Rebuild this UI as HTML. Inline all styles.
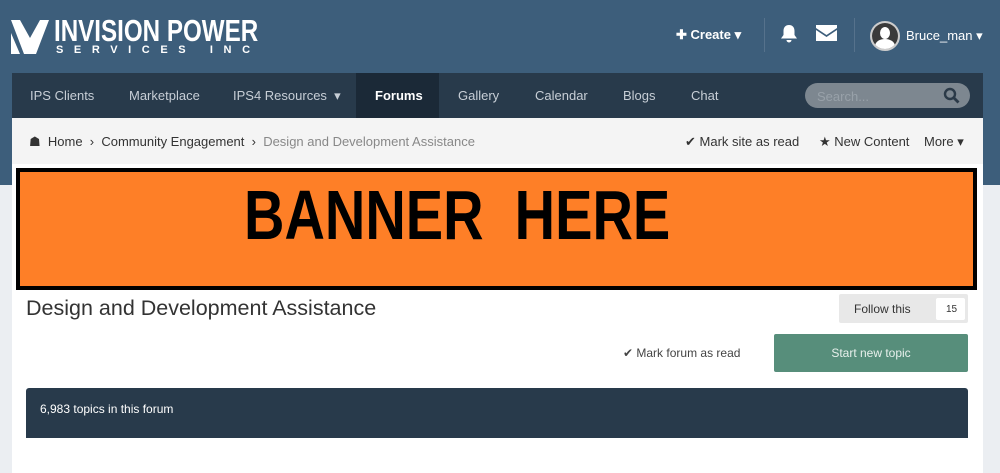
<!DOCTYPE html>
<html><head><style>
*{margin:0;padding:0;box-sizing:border-box}
body{width:1000px;height:430px;overflow:hidden;background:#ebeef2;font-family:"Liberation Sans",sans-serif;position:relative}
.a{position:absolute}
#hdr{left:0;top:0;width:1000px;height:185px;background:#3d5e7b}
#wrap{left:12px;top:73px;width:971px;height:400px;background:#fff}
#nav{left:12px;top:73px;width:971px;height:45px;background:#283a4b}
.nv{top:73px;height:45px;line-height:45px;color:#c7ced6;font-size:13px}
#bc{left:12px;top:118px;width:971px;height:46px;background:#f4f4f4}
.t{font-size:13px;color:#333}
</style></head><body>
<div id="hdr" class="a"></div>
<div id="wrap" class="a"></div>
<svg class="a" style="left:10px;top:19px" width="40" height="36" viewBox="0 0 40 36"><path d="M1 1h9l10 18 10-18h9L26 35H14z" fill="#fff"/><path d="M1 14l9 21H1z" fill="#fff"/></svg>
<div class="a" style="left:54px;top:14px;color:#fff;font:bold 31px 'Liberation Sans',sans-serif;line-height:34px;transform:scaleX(0.78);transform-origin:left;white-space:nowrap">INVISION POWER</div>
<div class="a" style="left:56px;top:44px;color:#fff;font:bold 11px 'Liberation Sans',sans-serif;letter-spacing:10.6px;white-space:nowrap">SERVICES INC</div>
<div class="a" style="left:676px;top:27px;color:#fff;font:bold 13px 'Liberation Sans';">✚ Create ▾</div>
<div class="a" style="left:764px;top:18px;width:1px;height:34px;background:#56728c"></div>
<svg class="a" style="left:780px;top:24px" width="18" height="19" viewBox="0 0 18 19"><path d="M9 1c-4 0-5.5 3-5.5 6v4L1 14.5h16L14.5 11V7C14.5 4 13 1 9 1z M6.5 16a2.5 2.5 0 005 0z" fill="#fff"/></svg>
<svg class="a" style="left:816px;top:25px" width="21" height="16" viewBox="0 0 21 16"><path d="M0 0h21v3l-10.5 7L0 3z M0 5l10.5 7L21 5v11H0z" fill="#fff"/></svg>
<div class="a" style="left:854px;top:18px;width:1px;height:34px;background:#56728c"></div>
<div class="a" style="left:870px;top:21px;width:30px;height:30px;border-radius:50%;background:#fff;overflow:hidden;border:2px solid #ccc"><div class="a" style="left:0;top:0;width:26px;height:26px;background:#3a3a3a"></div><div class="a" style="left:8px;top:4px;width:10px;height:12px;border-radius:50%;background:#fff"></div><div class="a" style="left:3px;top:16px;width:20px;height:14px;border-radius:50% 50% 0 0;background:#fff"></div></div>
<div class="a" style="left:906px;top:28px;color:#fff;font-size:13px">Bruce_man ▾</div>
<div id="nav" class="a"></div>
<div class="a" style="left:356px;top:73px;width:83px;height:45px;background:#1b2937"></div>
<div class="a nv" style="left:30px">IPS Clients</div>
<div class="a nv" style="left:129px">Marketplace</div>
<div class="a nv" style="left:233px">IPS4 Resources &nbsp;▾</div>
<div class="a nv" style="left:375px;color:#fff;font-weight:bold">Forums</div>
<div class="a nv" style="left:458px">Gallery</div>
<div class="a nv" style="left:535px">Calendar</div>
<div class="a nv" style="left:623px">Blogs</div>
<div class="a nv" style="left:691px">Chat</div>
<div class="a" style="left:805px;top:83px;width:165px;height:25px;border-radius:13px;background:#7d8790"></div>
<div class="a" style="left:817px;top:89px;color:#98a1a9;font-size:13px">Search...</div>
<svg class="a" style="left:943px;top:87px" width="17" height="17" viewBox="0 0 17 17"><circle cx="7" cy="7" r="5" stroke="#2b3a48" stroke-width="2.4" fill="none"/><path d="M10.5 10.5l5 5" stroke="#2b3a48" stroke-width="2.8"/></svg>
<div id="bc" class="a"></div>
<div class="a t" style="left:29px;top:134px">☗ &nbsp;Home &nbsp;›&nbsp; Community Engagement &nbsp;›&nbsp; <span style="color:#888">Design and Development Assistance</span></div>
<div class="a t" style="left:685px;top:134px">✔ Mark site as read</div>
<div class="a t" style="left:819px;top:134px">★ New Content</div>
<div class="a t" style="left:924px;top:134px">More ▾</div>
<div class="a" style="left:16px;top:168px;width:961px;height:122px;background:#fe7f27;border:4px solid #000"></div>
<div class="a" style="left:244px;top:180px;font:bold 70px 'Liberation Sans',sans-serif;line-height:70px;color:#000;transform:scaleX(0.8);transform-origin:left;white-space:pre">BANNER  HERE</div>
<div class="a" style="left:26px;top:296px;font-size:21.5px;color:#333">Design and Development Assistance</div>
<div class="a" style="left:839px;top:294px;width:129px;height:29px;background:#e8e8e8;border-radius:2px"></div>
<div class="a" style="left:854px;top:302px;font-size:12px;color:#333">Follow this</div>
<div class="a" style="left:936px;top:298px;width:29px;height:22px;background:#fff;border-radius:2px"></div>
<div class="a" style="left:946px;top:304px;font-size:10px;color:#333">15</div>
<div class="a" style="left:623px;top:346px;font-size:12px;color:#444">✔ Mark forum as read</div>
<div class="a" style="left:774px;top:334px;width:194px;height:38px;background:#578e7b;border-radius:2px;color:#e8f0ec;font-size:12px;text-align:center;line-height:38px">Start new topic</div>
<div class="a" style="left:26px;top:388px;width:942px;height:50px;background:#283a4b;border-radius:3px 3px 0 0"></div>
<div class="a" style="left:40px;top:402px;font-size:12px;color:#fff">6,983 topics in this forum</div>
</body></html>
